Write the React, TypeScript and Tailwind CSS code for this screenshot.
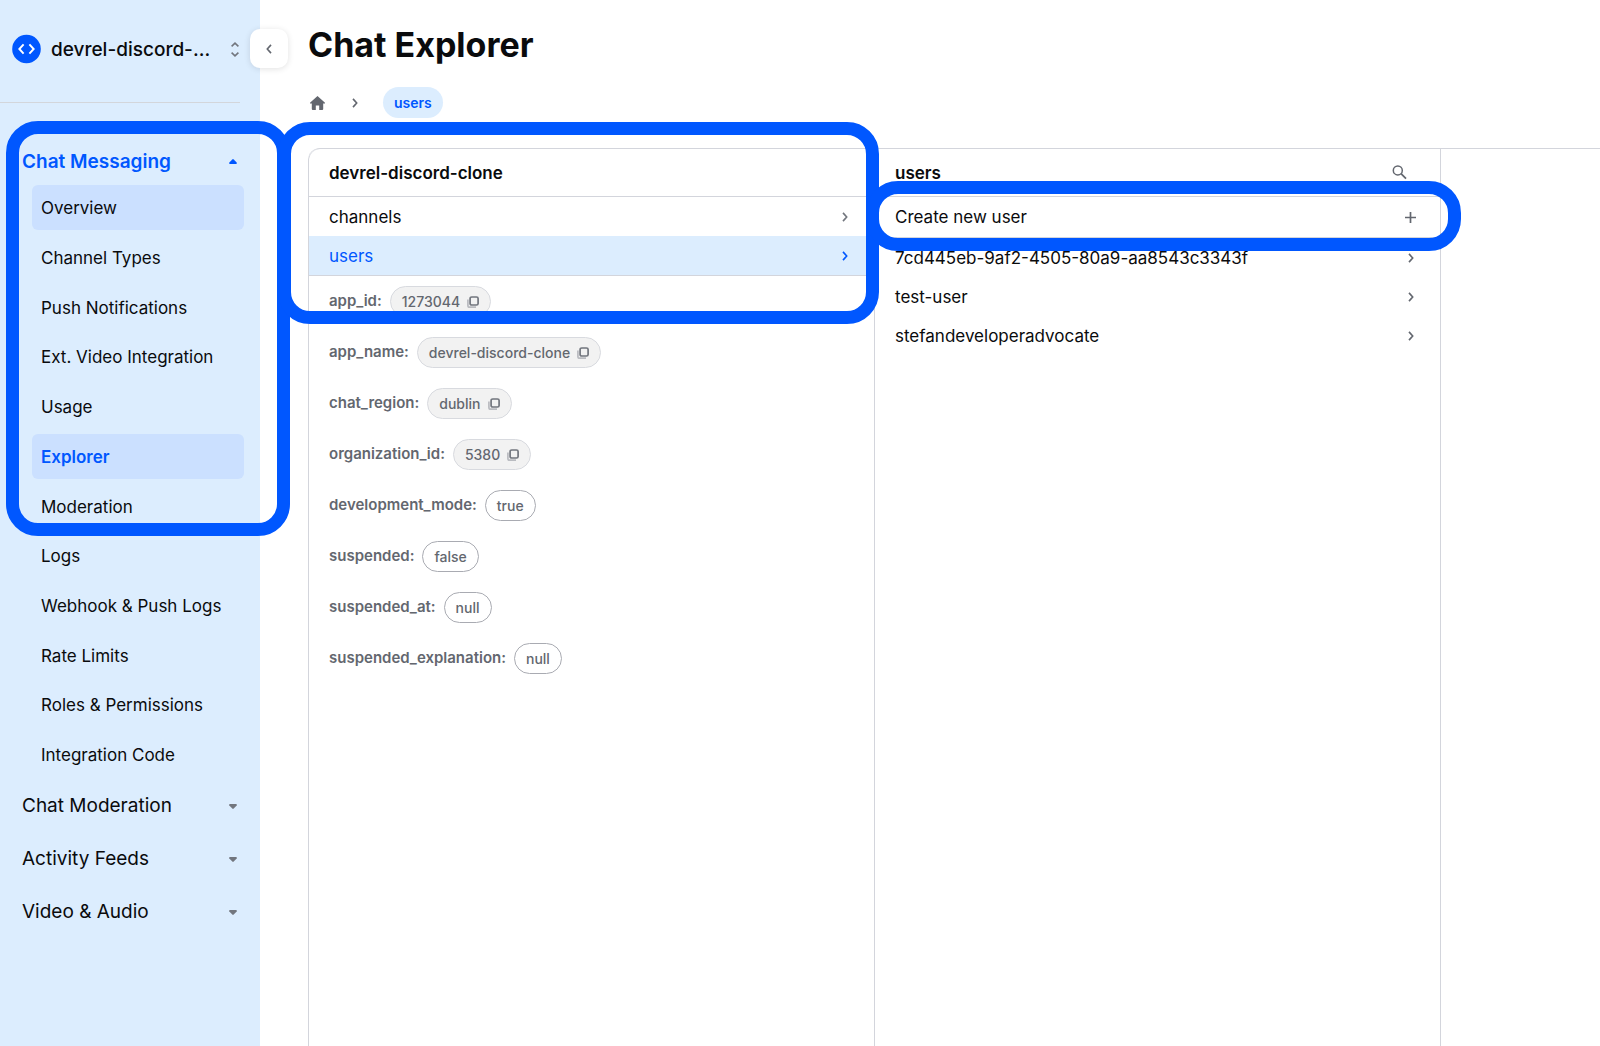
import React from "react";

type Prop = { name: string; value: string; copyable?: boolean };

const messagingItems = [
  "Overview",
  "Channel Types",
  "Push Notifications",
  "Ext. Video Integration",
  "Usage",
  "Explorer",
  "Moderation",
  "Logs",
  "Webhook & Push Logs",
  "Rate Limits",
  "Roles & Permissions",
  "Integration Code",
];

const sections = ["Chat Moderation", "Activity Feeds", "Video & Audio"];

const appProps: Prop[] = [
  { name: "app_id", value: "1273044", copyable: true },
  { name: "app_name", value: "devrel-discord-clone", copyable: true },
  { name: "chat_region", value: "dublin", copyable: true },
  { name: "organization_id", value: "5380", copyable: true },
  { name: "development_mode", value: "true" },
  { name: "suspended", value: "false" },
  { name: "suspended_at", value: "null" },
  { name: "suspended_explanation", value: "null" },
];

const users = [
  "7cd445eb-9af2-4505-80a9-aa8543c3343f",
  "test-user",
  "stefandeveloperadvocate",
];

function Chevron({ left = false }: { left?: boolean }) {
  return (
    <svg width="6" height="10" viewBox="0 0 6 10" fill="none" stroke="currentColor" strokeWidth="1.6" aria-hidden="true">
      <path d={left ? "M5 .9 1.3 5 5 9.1" : "M1 .9 4.7 5 1 9.1"} />
    </svg>
  );
}

function Caret({ up = false }: { up?: boolean }) {
  return (
    <svg width="8" height="5" viewBox="0 0 8 5" fill="currentColor" aria-hidden="true">
      <path
        d={
          up
            ? "M3.3.4Q4-.2 4.7.4L7.7 3.6Q8.2 5 7 5H1Q-.2 5 .3 3.6Z"
            : "M3.3 4.6Q4 5.2 4.7 4.6L7.7 1.4Q8.2 0 7 0H1Q-.2 0 .3 1.4Z"
        }
      />
    </svg>
  );
}

function CopyIcon() {
  return (
    <svg width="12" height="12" viewBox="0 0 12 12" fill="none" aria-hidden="true">
      <path d="M.9 3.6V9.4Q.9 11.1 2.6 11.1H9" stroke="#b9bbc0" strokeWidth="1.7" />
      <rect x="3.1" y="1" width="8" height="8" rx="1.6" stroke="#72767e" strokeWidth="1.7" />
    </svg>
  );
}

function Sidebar() {
  return (
    <aside className="w-[260px] shrink-0 bg-[#dcedfe] pb-10">
      <div className="mr-5 flex h-[103px] items-start border-b border-[#d3d6db] pt-[33px]">
        <button type="button" className="flex w-full items-center pl-3 text-left">
          <svg width="29" height="30" viewBox="0 0 30 30" fill="none" aria-hidden="true">
            <circle cx="15" cy="15" r="14.8" fill="#0057ff" />
            <path d="M12 10.3 7.6 15 12 19.7M18 10.3 22.4 15 18 19.7" stroke="#fff" strokeWidth="2" />
          </svg>
          <span className="ml-[10px] flex-1 pt-[2px] text-[19px] leading-[30px] font-medium">devrel-discord-...</span>
          <svg width="8" height="15" viewBox="0 0 8 15" fill="none" stroke="#72767e" strokeWidth="1.6" className="mr-[1px]" aria-hidden="true">
            <path d="M.6 4.4 4 1.2 7.4 4.4M.6 10.6 4 13.8 7.4 10.6" />
          </svg>
        </button>
      </div>

      <nav className="pt-10">
        <button type="button" className="flex h-9 w-full items-center justify-between pr-[23px] pl-[22px] text-[19px] font-semibold text-[#0057ff]">
          <span className="pt-[2px]">Chat Messaging</span>
          <Caret up />
        </button>
        <ul className="mt-[6px] mr-4 ml-8 flex h-[592px] flex-col justify-between">
          {messagingItems.map((item) => (
            <li key={item}>
              <a
                href="#"
                className={
                  item === "Explorer"
                    ? "flex h-[45px] items-center rounded-md bg-[#cbe0ff] px-[9px] pt-[3px] text-[17px] font-semibold text-[#0057ff]"
                    : item === "Overview"
                      ? "flex h-[45px] items-center rounded-md bg-[#cbe0ff] px-[9px] pt-[3px] text-[17px]"
                      : "flex h-[45px] items-center rounded-md px-[9px] pt-[3px] text-[17px]"
                }
              >
                {item}
              </a>
            </li>
          ))}
        </ul>
        <div className="mt-[3px]">
          {sections.map((section) => (
            <button key={section} type="button" className="flex h-[53px] w-full items-center justify-between pr-[23px] pl-[22px] text-[19px]">
              {section}
              <span className="text-[#72767e]">
                <Caret />
              </span>
            </button>
          ))}
        </div>
      </nav>
    </aside>
  );
}

function AppColumn() {
  return (
    <section className="w-[567px] shrink-0 rounded-tl-xl border-r border-l border-[#d3d5dc]">
      <h2 className="flex h-12 items-center border-b border-[#d3d5dc] px-5 pt-[2px] text-[17px] font-semibold">devrel-discord-clone</h2>
      <button type="button" className="flex h-[39px] w-full items-center justify-between pr-[26px] pl-5 text-[17px]">
        <span className="pt-[2px]">channels</span>
        <span className="text-[#72767e]">
          <Chevron />
        </span>
      </button>
      <button type="button" className="flex h-10 w-full items-center justify-between border-b border-[#d3d5dc] bg-[#dcedfe] pr-[26px] pl-5 text-[17px] text-[#0057ff]">
        <span className="pt-[2px]">users</span>
        <Chevron />
      </button>
      <dl className="flex flex-col gap-5 px-5 pt-[10px] text-[#63676f]">
        {appProps.map((p) => (
          <div key={p.name} className="flex h-[31px] items-center gap-2">
            <dt className="text-[15px] font-semibold">{p.name}:</dt>
            <dd className="text-[14px] font-medium">
              {p.copyable ? (
                <button type="button" className="flex h-[31px] items-center gap-[7px] rounded-2xl border border-[#d8dadf] bg-[#f2f2f2] px-[11px]">
                  {p.value}
                  <CopyIcon />
                </button>
              ) : (
                <span className="flex h-[31px] items-center rounded-2xl border border-[#a9abb2] px-[11px]">{p.value}</span>
              )}
            </dd>
          </div>
        ))}
      </dl>
    </section>
  );
}

function UsersColumn() {
  return (
    <section className="w-[566px] shrink-0 border-r border-[#d3d5dc]">
      <div className="flex h-12 items-center justify-between border-b border-[#d3d5dc] pr-[33px] pl-5">
        <h2 className="pt-[2px] text-[17px] font-semibold">users</h2>
        <button type="button" aria-label="Search users">
          <svg width="15" height="15" viewBox="0 0 15 15" fill="none" stroke="#63676f" aria-hidden="true">
            <circle cx="5.8" cy="5.4" r="4.5" strokeWidth="1.5" />
            <path d="M9 8.6 14 13.6" strokeWidth="1.8" />
          </svg>
        </button>
      </div>
      <button type="button" className="flex h-[41px] w-full items-center justify-between border-b border-[#d3d5dc] pr-6 pl-5 text-[17px]">
        <span className="pt-[2px]">Create new user</span>
        <svg width="11" height="11" viewBox="0 0 11 11" stroke="#63676f" strokeWidth="1.7" aria-hidden="true">
          <path d="M5.5 0V11M0 5.5H11" />
        </svg>
      </button>
      <ul>
        {users.map((user) => (
          <li key={user}>
            <button type="button" className="flex h-[39px] w-full items-center justify-between pr-[26px] pl-5 text-[17px]">
              <span className="pt-[2px]">{user}</span>
              <span className="text-[#63676f]">
                <Chevron />
              </span>
            </button>
          </li>
        ))}
      </ul>
    </section>
  );
}

export default function App() {
  return (
    <div className="relative flex min-h-screen overflow-hidden bg-white font-['Inter',sans-serif] text-[#0a0b0d]">
      <Sidebar />
      <main className="flex min-w-0 flex-1 flex-col pl-12">
        <h1 className="pt-6 text-[34px] leading-[42px] font-bold">Chat Explorer</h1>
        <nav aria-label="Breadcrumb" className="mt-[21px] flex h-[31px] items-center text-[14px]">
          <a href="#" aria-label="Home" className="ml-[2px] text-[#63676f]">
            <svg width="15" height="14" viewBox="0 0 15 14" fill="currentColor" aria-hidden="true">
              <path d="M7.5 0 15 6.8V7.6H13.2V13Q13.2 14 12.2 14H9.2V9.4H5.8V14H2.8Q1.8 14 1.8 13V7.6H0V6.8Z" />
            </svg>
          </a>
          <span className="mr-[25px] ml-[27px] text-[#63676f]">
            <Chevron />
          </span>
          <a href="#" className="flex h-[31px] items-center rounded-full bg-[#dcedfe] px-[11px] font-semibold text-[#0057ff]">
            users
          </a>
        </nav>
        <div className="mt-[30px] flex flex-1 rounded-tl-xl border-t border-[#d3d5dc]">
          <AppColumn />
          <UsersColumn />
        </div>
      </main>

      <button type="button" aria-label="Collapse sidebar" className="absolute top-[29px] left-[250px] flex h-[39px] w-[38px] items-center justify-center rounded-[10px] bg-white text-[#63676f] shadow-[0_1px_6px_rgba(0,0,0,0.12)]">
        <Chevron left />
      </button>

      <div className="pointer-events-none absolute top-[121px] left-[6px] h-[415px] w-[284px] rounded-[32px] border-[13px] border-[#0057ff]" />
      <div className="pointer-events-none absolute top-[122px] left-[278px] h-[202px] w-[601px] rounded-[32px] border-[13px] border-[#0057ff]" />
      <div className="pointer-events-none absolute top-[181px] left-[866px] h-[70px] w-[595px] rounded-[32px] border-[13px] border-[#0057ff]" />
    </div>
  );
}
